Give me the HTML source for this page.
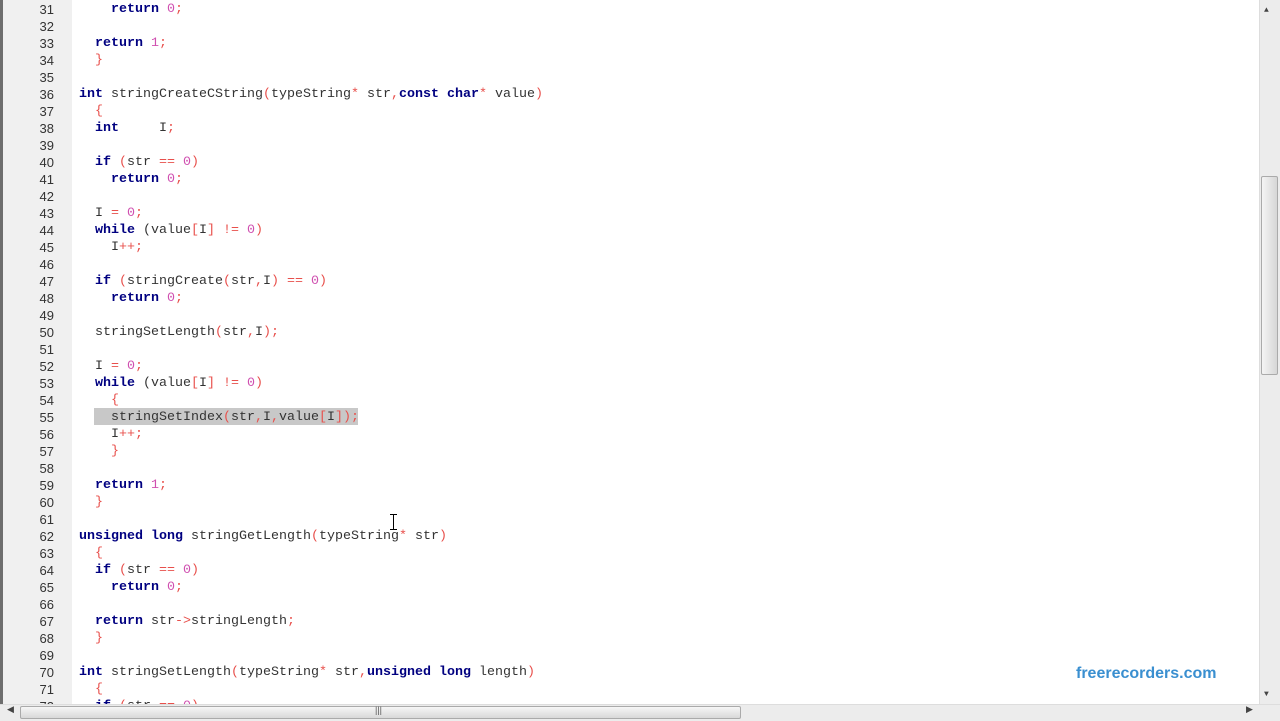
<!DOCTYPE html>
<html><head><style>
body{margin:0;width:1280px;height:720px;overflow:hidden;background:#fff;position:relative;font-family:"Liberation Mono",monospace;}
#lb{position:absolute;left:0;top:0;width:3px;height:704px;background:#6e6e6e}
#gut{position:absolute;left:3px;top:0;width:69px;height:704px;background:#f0f0f0}
.l{position:absolute;left:0;height:17px;line-height:17px;font-size:13.33px;white-space:pre;color:#333}
.n{position:absolute;left:10px;width:44px;text-align:right;height:17px;line-height:17px;color:#333;font-family:"Liberation Sans",sans-serif;font-size:13px}
.c{position:absolute;left:79px}
.k{color:#000080;font-weight:bold}
.p{color:#e8504c}
.d{color:#d050b0}
#hl{position:absolute;left:94px;top:408px;width:264px;height:17px;background:#c8c8c8}
#vs{position:absolute;left:1259px;top:0;width:21px;height:704px;background:#ececec;border-left:1px solid #ddd}
#vt{position:absolute;left:1261px;top:176px;width:15px;height:197px;background:linear-gradient(90deg,#f4f4f4,#d6d6d6);border:1px solid #aaa;border-radius:2px}
#hs{position:absolute;left:0;top:704px;width:1280px;height:16px;background:#ececec;border-top:1px solid #ddd}
#ht{position:absolute;left:20px;top:706px;width:719px;height:11px;background:linear-gradient(#f6f6f6,#d8d8d8);border:1px solid #aaa;border-radius:2px}
#wm{position:absolute;left:1076px;top:665px;font-family:"Liberation Sans",sans-serif;font-weight:bold;font-size:16px;color:#3a8fd0}
</style></head><body>
<div id="lb"></div><div id="gut"></div><div id="hl"></div>
<div id="code"></div>
<div id="vs"></div><div id="vt"></div>
<div style="position:absolute;left:1264px;top:6px;font-size:8px;color:#444">▲</div>
<div style="position:absolute;left:1264px;top:690px;font-size:8px;color:#444">▼</div>
<div id="hs"></div><div id="ht"></div>
<div style="position:absolute;left:7px;top:705px;font-size:9px;color:#444">◀</div>
<div style="position:absolute;left:1246px;top:705px;font-size:9px;color:#444">▶</div>
<div style="position:absolute;left:375px;top:705px;font-size:9px;color:#555;font-family:'Liberation Sans'">|||</div>
<div id="wm">freerecorders.com</div>
<div style="position:absolute;left:393px;top:514px;width:1px;height:16px;background:#000"></div>
<div style="position:absolute;left:390px;top:514px;width:7px;height:1px;background:#000"></div>
<div style="position:absolute;left:390px;top:529px;width:7px;height:1px;background:#000"></div>
<script>
var L={
31:'    <k>return</k> <d>0</d><p>;</p>',
33:'  <k>return</k> <d>1</d><p>;</p>',
34:'  <p>}</p>',
36:'<k>int</k> stringCreateCString<p>(</p>typeString<p>*</p> str<p>,</p><k>const</k> <k>char</k><p>*</p> value<p>)</p>',
37:'  <p>{</p>',
38:'  <k>int</k>     I<p>;</p>',
40:'  <k>if</k> <p>(</p>str <p>==</p> <d>0</d><p>)</p>',
41:'    <k>return</k> <d>0</d><p>;</p>',
43:'  I <p>=</p> <d>0</d><p>;</p>',
44:'  <k>while</k> (value<p>[</p>I<p>]</p> <p>!=</p> <d>0</d><p>)</p>',
45:'    I<p>++;</p>',
47:'  <k>if</k> <p>(</p>stringCreate<p>(</p>str<p>,</p>I<p>)</p> <p>==</p> <d>0</d><p>)</p>',
48:'    <k>return</k> <d>0</d><p>;</p>',
50:'  stringSetLength<p>(</p>str<p>,</p>I<p>);</p>',
52:'  I <p>=</p> <d>0</d><p>;</p>',
53:'  <k>while</k> (value<p>[</p>I<p>]</p> <p>!=</p> <d>0</d><p>)</p>',
54:'    <p>{</p>',
55:'    stringSetIndex<p>(</p>str<p>,</p>I<p>,</p>value<p>[</p>I<p>]);</p>',
56:'    I<p>++;</p>',
57:'    <p>}</p>',
59:'  <k>return</k> <d>1</d><p>;</p>',
60:'  <p>}</p>',
62:'<k>unsigned</k> <k>long</k> stringGetLength<p>(</p>typeString<p>*</p> str<p>)</p>',
63:'  <p>{</p>',
64:'  <k>if</k> <p>(</p>str <p>==</p> <d>0</d><p>)</p>',
65:'    <k>return</k> <d>0</d><p>;</p>',
67:'  <k>return</k> str<p>-&gt;</p>stringLength<p>;</p>',
68:'  <p>}</p>',
70:'<k>int</k> stringSetLength<p>(</p>typeString<p>*</p> str<p>,</p><k>unsigned</k> <k>long</k> length<p>)</p>',
71:'  <p>{</p>',
72:'  <k>if</k> <p>(</p>str <p>==</p> <d>0</d><p>)</p>'
};
var h='';
for(var n=31;n<=72;n++){var t=(n-31)*17+1;var s=(L[n]||'').replace(/<(\/?)([kpd])>/g,function(m,a,b){return a?'</span>':'<span class="'+b+'">'});
h+='<div class="l" style="top:'+t+'px"><span class="n">'+n+'</span><span class="c">'+s+'</span></div>';}
document.getElementById('code').innerHTML=h;
</script>
</body></html>
